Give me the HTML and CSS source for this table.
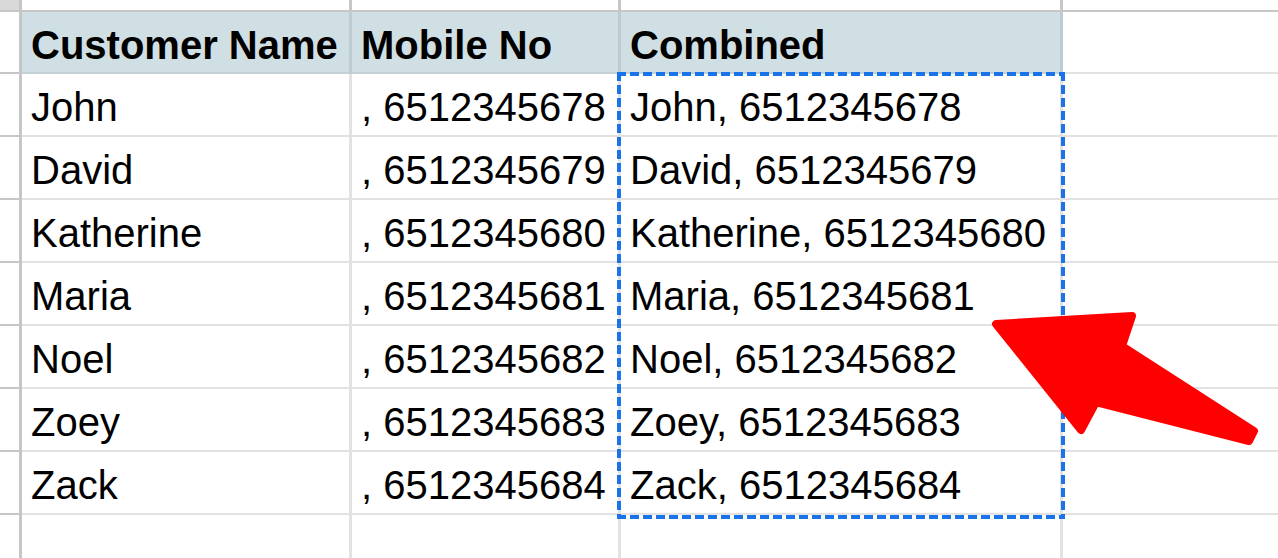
FILE: index.html
```html
<!DOCTYPE html>
<html>
<head>
<meta charset="utf-8">
<link rel="stylesheet" href="styles.css">
</head>
<body>
<div class="sheet">
  <div class="row top">
    <div class="cell rh corner"></div>
    <div class="cell"></div>
    <div class="cell"></div>
    <div class="cell"></div>
    <div class="cell last"></div>
  </div>
  <div class="row head">
    <div class="cell rh"></div>
    <div class="cell hd">Customer Name</div>
    <div class="cell hd">Mobile No</div>
    <div class="cell hd">Combined</div>
    <div class="cell last"></div>
  </div>
  <div class="row">
    <div class="cell rh"></div>
    <div class="cell">John</div>
    <div class="cell">, 6512345678</div>
    <div class="cell">John, 6512345678</div>
    <div class="cell last"></div>
  </div>
  <div class="row">
    <div class="cell rh"></div>
    <div class="cell">David</div>
    <div class="cell">, 6512345679</div>
    <div class="cell">David, 6512345679</div>
    <div class="cell last"></div>
  </div>
  <div class="row">
    <div class="cell rh"></div>
    <div class="cell">Katherine</div>
    <div class="cell">, 6512345680</div>
    <div class="cell">Katherine, 6512345680</div>
    <div class="cell last"></div>
  </div>
  <div class="row">
    <div class="cell rh"></div>
    <div class="cell">Maria</div>
    <div class="cell">, 6512345681</div>
    <div class="cell">Maria, 6512345681</div>
    <div class="cell last"></div>
  </div>
  <div class="row">
    <div class="cell rh"></div>
    <div class="cell">Noel</div>
    <div class="cell">, 6512345682</div>
    <div class="cell">Noel, 6512345682</div>
    <div class="cell last"></div>
  </div>
  <div class="row">
    <div class="cell rh"></div>
    <div class="cell">Zoey</div>
    <div class="cell">, 6512345683</div>
    <div class="cell">Zoey, 6512345683</div>
    <div class="cell last"></div>
  </div>
  <div class="row">
    <div class="cell rh"></div>
    <div class="cell">Zack</div>
    <div class="cell">, 6512345684</div>
    <div class="cell">Zack, 6512345684</div>
    <div class="cell last"></div>
  </div>
  <div class="row filler">
    <div class="cell rh"></div>
    <div class="cell"></div>
    <div class="cell"></div>
    <div class="cell"></div>
    <div class="cell last"></div>
  </div>

  <div class="selection"></div>

  <svg class="arrow" width="1278" height="558" viewBox="0 0 1278 558">
    <polygon points="996,324 1132,316 1122,346 1254,431 1249,441 1096,402 1081,430"
      fill="#ff0000" stroke="#ff0000" stroke-width="8" stroke-linejoin="round"/>
  </svg>
</div>
</body>
</html>
```

FILE: styles.css
```css
html, body {
  margin: 0;
  padding: 0;
  background: #ffffff;
}

.sheet {
  position: relative;
  width: 1278px;
  height: 558px;
  overflow: hidden;
  display: flex;
  flex-direction: column;
  font-family: "Liberation Sans", Arial, sans-serif;
  font-size: 40px;
  line-height: 40px;
  color: #000;
}

.row {
  display: grid;
  grid-template-columns: 22px 330px 269px 442px 1fr;
  height: 63px;
  flex: none;
}

.row.top { height: 12px; }
.row.head { height: 62px; }
.row.filler { flex: 1; height: auto; }

.cell {
  box-sizing: border-box;
  border-right: 3px solid #e2e2e2;
  border-bottom: 2px solid #e2e2e2;
  padding: 0 0 8px 9px;
  display: flex;
  align-items: flex-end;
  white-space: nowrap;
  overflow: visible;
}

.cell.last { border-right: none; }

.row.filler .cell { border-bottom: none; }

.cell.rh {
  border-right-color: #c6c6c6;
  border-bottom-color: #c6c6c6;
  padding: 0;
}

.row.top .cell {
  border-right-color: #c6c6c6;
  border-bottom-color: #c6c6c6;
  padding: 0;
}

.row.top .cell.corner {
  background: #d9d9d9;
}

.cell.hd {
  background: #d0dfe3;
  font-weight: bold;
  border-right-color: #bdccd0;
  border-bottom-color: #c3d1d5;
  padding-bottom: 7px;
}

.selection {
  position: absolute;
  left: 617px;
  top: 72px;
  width: 448px;
  height: 447px;
  pointer-events: none;
  background:
    repeating-linear-gradient(90deg, #1a73e8 0 9px, transparent 9px 13px) left top / 100% 4px no-repeat,
    repeating-linear-gradient(90deg, #1a73e8 0 9px, transparent 9px 13px) left bottom / 100% 4px no-repeat,
    repeating-linear-gradient(180deg, #1a73e8 0 9px, transparent 9px 13px) left top / 4px 100% no-repeat,
    repeating-linear-gradient(180deg, #1a73e8 0 9px, transparent 9px 13px) right top / 4px 100% no-repeat;
}

.arrow {
  position: absolute;
  left: 0;
  top: 0;
  pointer-events: none;
}
```
